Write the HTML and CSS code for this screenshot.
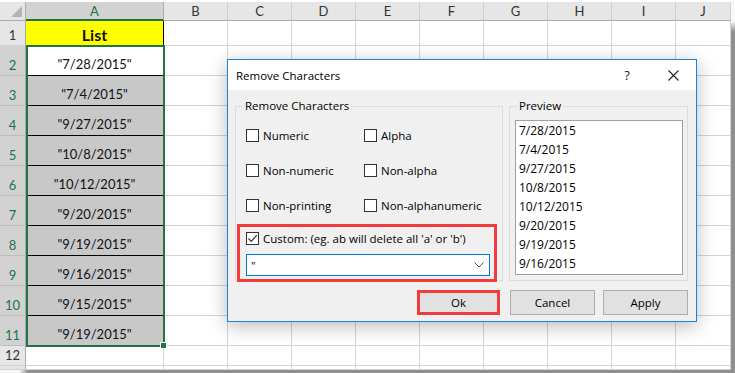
FILE: index.html
```html
<!DOCTYPE html>
<html>
<head>
<meta charset="utf-8">
<link rel="stylesheet" href="styles.css">
</head>
<body>
<div class="screen">
  <div class="sheet">
    <div class="corner"><span class="tri"></span></div>
    <div class="ch ch-sel">A</div><div class="ch">B</div><div class="ch">C</div><div class="ch">D</div><div class="ch">E</div><div class="ch">F</div><div class="ch">G</div><div class="ch">H</div><div class="ch">I</div><div class="ch">J</div>

    <div class="rh">1</div><div class="c a1">List</div><div class="c"></div><div class="c"></div><div class="c"></div><div class="c"></div><div class="c"></div><div class="c"></div><div class="c"></div><div class="c"></div><div class="c"></div>
    <div class="rh rh-sel">2</div><div class="c av active">"7/28/2015"</div><div class="c"></div><div class="c"></div><div class="c"></div><div class="c"></div><div class="c"></div><div class="c"></div><div class="c"></div><div class="c"></div><div class="c"></div>
    <div class="rh rh-sel">3</div><div class="c av">"7/4/2015"</div><div class="c"></div><div class="c"></div><div class="c"></div><div class="c"></div><div class="c"></div><div class="c"></div><div class="c"></div><div class="c"></div><div class="c"></div>
    <div class="rh rh-sel">4</div><div class="c av">"9/27/2015"</div><div class="c"></div><div class="c"></div><div class="c"></div><div class="c"></div><div class="c"></div><div class="c"></div><div class="c"></div><div class="c"></div><div class="c"></div>
    <div class="rh rh-sel">5</div><div class="c av">"10/8/2015"</div><div class="c"></div><div class="c"></div><div class="c"></div><div class="c"></div><div class="c"></div><div class="c"></div><div class="c"></div><div class="c"></div><div class="c"></div>
    <div class="rh rh-sel">6</div><div class="c av">"10/12/2015"</div><div class="c"></div><div class="c"></div><div class="c"></div><div class="c"></div><div class="c"></div><div class="c"></div><div class="c"></div><div class="c"></div><div class="c"></div>
    <div class="rh rh-sel">7</div><div class="c av">"9/20/2015"</div><div class="c"></div><div class="c"></div><div class="c"></div><div class="c"></div><div class="c"></div><div class="c"></div><div class="c"></div><div class="c"></div><div class="c"></div>
    <div class="rh rh-sel">8</div><div class="c av">"9/19/2015"</div><div class="c"></div><div class="c"></div><div class="c"></div><div class="c"></div><div class="c"></div><div class="c"></div><div class="c"></div><div class="c"></div><div class="c"></div>
    <div class="rh rh-sel">9</div><div class="c av">"9/16/2015"</div><div class="c"></div><div class="c"></div><div class="c"></div><div class="c"></div><div class="c"></div><div class="c"></div><div class="c"></div><div class="c"></div><div class="c"></div>
    <div class="rh rh-sel">10</div><div class="c av">"9/15/2015"</div><div class="c"></div><div class="c"></div><div class="c"></div><div class="c"></div><div class="c"></div><div class="c"></div><div class="c"></div><div class="c"></div><div class="c"></div>
    <div class="rh rh-sel">11</div><div class="c av last">"9/19/2015"</div><div class="c"></div><div class="c"></div><div class="c"></div><div class="c"></div><div class="c"></div><div class="c"></div><div class="c"></div><div class="c"></div><div class="c"></div>
    <div class="rh">12</div><div class="c"></div><div class="c"></div><div class="c"></div><div class="c"></div><div class="c"></div><div class="c"></div><div class="c"></div><div class="c"></div><div class="c"></div><div class="c"></div>
    <div class="rh"></div><div class="c"></div><div class="c"></div><div class="c"></div><div class="c"></div><div class="c"></div><div class="c"></div><div class="c"></div><div class="c"></div><div class="c"></div><div class="c"></div>
  </div>

  <div class="selection"><span class="handle"></span></div>

  <div class="frame-right"></div>
  <div class="frame-bottom"></div>

  <div class="dialog">
    <div class="titlebar">
      <span class="title">Remove Characters</span>
      <span class="tb-btn help">?</span>
      <span class="tb-btn close">
        <svg width="11" height="11" viewBox="0 0 11 11"><path d="M0.5 0.5 L10.5 10.5 M10.5 0.5 L0.5 10.5" stroke="#222" stroke-width="1.1" fill="none"/></svg>
      </span>
    </div>
    <div class="body">
      <div class="groups">
        <fieldset class="group group-left">
          <legend>Remove Characters</legend>
          <div class="group-inner">
            <div class="opts">
              <label class="opt"><span class="box"></span>Numeric</label>
              <label class="opt"><span class="box"></span>Alpha</label>
              <label class="opt"><span class="box"></span>Non-numeric</label>
              <label class="opt"><span class="box"></span>Non-alpha</label>
              <label class="opt"><span class="box"></span>Non-printing</label>
              <label class="opt"><span class="box"></span>Non-alphanumeric</label>
            </div>
            <label class="opt custom"><span class="box"><svg width="11" height="11" viewBox="0 0 11 11"><path d="M1.5 5.5 L4.2 8.3 L9.8 2.2" stroke="#333" stroke-width="1.2" fill="none"/></svg></span>Custom: (eg. ab will delete all 'a' or 'b')</label>
            <div class="combo">
              <span class="combo-val">"</span>
              <svg class="chev" width="10" height="6" viewBox="0 0 10 6"><path d="M0.5 0.5 L5 5 L9.5 0.5" stroke="#555" stroke-width="1" fill="none"/></svg>
            </div>
          </div>
        </fieldset>
        <fieldset class="group group-right">
          <legend>Preview</legend>
          <div class="list">
            <div>7/28/2015</div>
            <div>7/4/2015</div>
            <div>9/27/2015</div>
            <div>10/8/2015</div>
            <div>10/12/2015</div>
            <div>9/20/2015</div>
            <div>9/19/2015</div>
            <div>9/16/2015</div>
          </div>
        </fieldset>
      </div>
      <div class="buttons">
        <button class="btn ok">Ok</button>
        <button class="btn cancel">Cancel</button>
        <button class="btn apply">Apply</button>
      </div>
    </div>
    <div class="mark-custom"></div>
  </div>
</div>
</body>
</html>
```

FILE: styles.css
```css
html, body {
  margin: 0;
  padding: 0;
  background: #ffffff;
}

.screen {
  position: relative;
  width: 735px;
  height: 373px;
  overflow: hidden;
  background: #f7f7f7;
  font-family: Lato, "Liberation Sans", sans-serif;
}

.sheet {
  display: grid;
  grid-template-columns: 26px 138px repeat(8, 64px) 55px;
  grid-template-rows: 19px 25px repeat(10, 30px) 20px 4px;
  padding-top: 2px;
  background: #ffffff;
  width: 731px;
}

.corner {
  background: #e6e6e6;
  border-right: 1px solid #ababab;
  border-bottom: 1px solid #ababab;
  box-sizing: border-box;
  position: relative;
}
.tri {
  position: absolute;
  right: 3px;
  bottom: 3px;
  width: 0;
  height: 0;
  border-left: 11px solid transparent;
  border-bottom: 11px solid #b4b4b4;
}

.ch {
  background: #e6e6e6;
  border-right: 1px solid #cfcfcf;
  border-bottom: 1px solid #ababab;
  box-sizing: border-box;
  display: flex;
  align-items: center;
  justify-content: center;
  font-size: 13px;
  color: #333;
}
.ch-sel {
  background: #d2d2d2;
  color: #217346;
  border-bottom: 2px solid #217346;
  border-right-color: #ababab;
}

.rh {
  background: #e6e6e6;
  border-right: 1px solid #ababab;
  border-bottom: 1px solid #cfcfcf;
  box-sizing: border-box;
  display: flex;
  align-items: flex-end;
  justify-content: center;
  padding-bottom: 2px;
  font-size: 13px;
  color: #333;
}
.rh-sel {
  background: #d2d2d2;
  color: #217346;
  border-bottom-color: #bdbdbd;
}

.c {
  border-right: 1px solid #d4d4d4;
  border-bottom: 1px solid #d4d4d4;
  box-sizing: border-box;
  display: flex;
  align-items: flex-end;
  justify-content: center;
  padding-bottom: 3px;
  font-size: 13px;
  color: #111;
}

.a1 {
  background: #ffff00;
  border-right: 1px solid #000;
  border-bottom: 1px solid #000;
  font-weight: 700;
  font-size: 16px;
  padding-bottom: 1px;
}

.av {
  background: #c8c8c8;
  border-bottom: 1px solid #000;
  border-right: 1px solid #000;
}
.av.active {
  background: #ffffff;
}
.av.last {
  border-bottom-color: #d4d4d4;
}

.selection {
  position: absolute;
  left: 26px;
  top: 45px;
  width: 139px;
  height: 302px;
  box-sizing: border-box;
  border: 2px solid #217346;
}
.handle {
  position: absolute;
  right: -4px;
  bottom: -4px;
  width: 5px;
  height: 5px;
  background: #217346;
  border: 1px solid #ffffff;
}

.frame-right {
  position: absolute;
  right: 0;
  top: 22px;
  width: 4px;
  height: 351px;
  background: linear-gradient(to bottom, #f0f0f0 0px, #8f8f8f 10px, #8f8f8f 100%);
}
.frame-bottom {
  position: absolute;
  left: 20px;
  bottom: 0;
  width: 715px;
  height: 3px;
  background: linear-gradient(to right, #f0f0f0 0px, #8f8f8f 8px, #8f8f8f 100%);
}

/* dialog */
.dialog {
  position: absolute;
  left: 227px;
  top: 59px;
  width: 470px;
  height: 263px;
  box-sizing: border-box;
  border: 1px solid #1883d7;
  background: #f0f0f0;
  box-shadow: 0 4px 18px rgba(0, 0, 0, 0.28);
  font-family: "Open Sans", "Noto Sans", sans-serif;
  font-size: 11.5px;
  color: #000;
  display: flex;
  flex-direction: column;
}

.titlebar {
  height: 30px;
  background: #ffffff;
  display: flex;
  align-items: center;
  padding-left: 8px;
}
.title {
  flex: 1;
  font-size: 11.5px;
  color: #000;
}
.tb-btn {
  width: 46px;
  height: 30px;
  display: flex;
  align-items: center;
  justify-content: center;
}
.help {
  font-size: 13px;
  color: #222;
}

.body {
  flex: 1;
  padding: 8px 8px 0 7px;
  display: flex;
  flex-direction: column;
}

.groups {
  display: flex;
  gap: 6px;
  height: 183px;
}

.group {
  margin: 0;
  padding: 0;
  border: 1px solid #dcdcdc;
  box-sizing: border-box;
  height: 183px;
  min-width: 0;
}
.group legend {
  margin-left: 7px;
  padding: 0 2px;
  line-height: 16px;
  font-size: 11.5px;
  color: #000;
}
.group-left {
  width: 268px;
}
.group-right {
  width: 179px;
}
.group-inner {
  padding-left: 10px;
}

.opts {
  display: grid;
  grid-template-columns: 118px 1fr;
  grid-auto-rows: 18px;
  row-gap: 17px;
  padding-top: 12px;
}

.opt {
  display: flex;
  align-items: center;
  gap: 4px;
  height: 18px;
  white-space: nowrap;
}
.box {
  width: 13px;
  height: 13px;
  box-sizing: border-box;
  border: 1px solid #333;
  background: #fff;
  display: flex;
  align-items: center;
  justify-content: center;
  flex: none;
}
.custom {
  margin-top: 15px;
}

.combo {
  margin-top: 7px;
  width: 244px;
  height: 22px;
  box-sizing: border-box;
  border: 1px solid #0078d7;
  background: #fff;
  display: flex;
  align-items: center;
  padding-left: 4px;
  padding-right: 5px;
}
.combo-val {
  flex: 1;
}

.list {
  margin-top: 6px;
  margin-left: 5px;
  width: 168px;
  height: 155px;
  box-sizing: border-box;
  border: 1px solid #a0a0a0;
  background: #fff;
  padding-left: 3px;
  font-size: 12px;
  line-height: 19px;
}

.buttons {
  display: flex;
  justify-content: flex-end;
  margin-top: 9px;
}
.btn {
  height: 25px;
  width: 85px;
  box-sizing: border-box;
  border: 1px solid #adadad;
  background: #e1e1e1;
  font-family: "Open Sans", "Noto Sans", sans-serif;
  font-size: 11.5px;
  color: #000;
  padding: 0;
  margin-left: 8px;
}
.ok {
  width: 83px;
  border: 3px solid #f03c3c;
  margin-left: 0;
  margin-right: 2px;
}

.mark-custom {
  position: absolute;
  left: 9px;
  top: 164px;
  width: 260px;
  height: 58px;
  box-sizing: border-box;
  border: 3px solid #f03c3c;
}
```
